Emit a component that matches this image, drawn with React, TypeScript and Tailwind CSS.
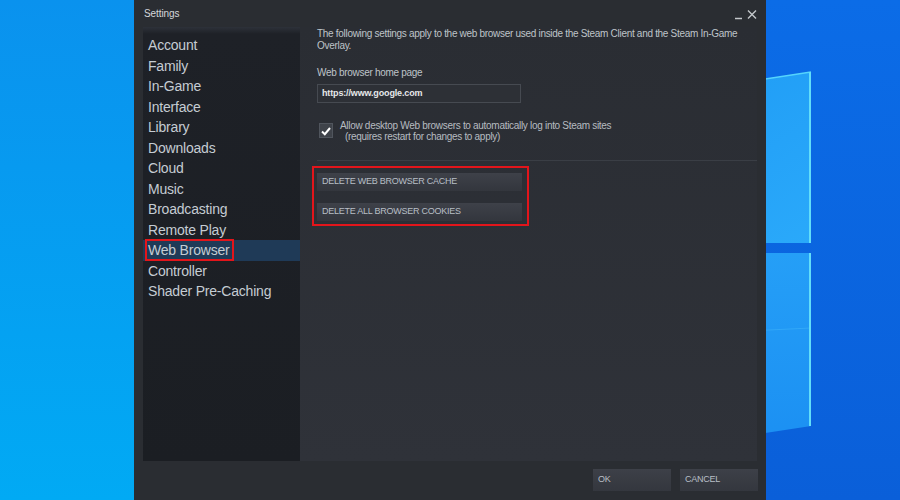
import React from 'react'

const navItems = [
    'Account',
    'Family',
    'In-Game',
    'Interface',
    'Library',
    'Downloads',
    'Cloud',
    'Music',
    'Broadcasting',
    'Remote Play',
    'Web Browser',
    'Controller',
    'Shader Pre-Caching',
]

function WindowsLogo() {
    return (
        <svg className="absolute inset-0" width="900" height="500" viewBox="0 0 900 500">
            <defs>
                <linearGradient id="paneTop" x1="0" y1="0" x2="1" y2="1">
                    <stop offset="0" stopColor="#1c98f4" />
                    <stop offset="1" stopColor="#2aa9fa" />
                </linearGradient>
                <linearGradient id="paneBottom" x1="0" y1="0" x2="0" y2="1">
                    <stop offset="0" stopColor="#259ff7" />
                    <stop offset="1" stopColor="#1a8ef2" />
                </linearGradient>
            </defs>
            {/* top pane */}
            <polygon points="560,111 811,72 811,243 560,243" fill="url(#paneTop)" />
            <line x1="560" y1="111" x2="811" y2="72" stroke="#55d4fc" strokeWidth="1.5" />
            <line x1="810" y1="72" x2="810" y2="243" stroke="#62def9" strokeWidth="2" />
            {/* bottom pane */}
            <polygon points="560,253 811,253 811,426 560,465" fill="url(#paneBottom)" />
            <line x1="560" y1="340" x2="811" y2="328" stroke="#3db2fa" strokeWidth="1" opacity="0.6" />
            <line x1="810" y1="253" x2="810" y2="426" stroke="#62def9" strokeWidth="2" />
        </svg>
    )
}

export default function App() {
    return (
        <div className="relative w-[900px] h-[500px] overflow-hidden font-['Liberation_Sans',Arial,sans-serif]">
            {/* Desktop */}
            <div className="absolute inset-0 flex">
                <div className="w-1/2 h-full bg-[linear-gradient(to_bottom,#0a92ee,#01aaf4)]" />
                <div className="w-1/2 h-full bg-[linear-gradient(to_bottom,#0b6ce7,#0a5fd9)]" />
            </div>
            <WindowsLogo />

            {/* Settings window */}
            <div className="absolute left-[134px] top-0 w-[632px] h-[500px] bg-[#2a2d32] flex flex-col">
                <div className="h-[27px] flex items-center justify-between pl-[10px] pr-[8px]">
                    <span className="text-[10px] tracking-[-0.1px] text-[#d4d7da]">Settings</span>
                    <svg width="24" height="12" viewBox="0 0 24 12" className="mt-[2px]">
                        <line x1="1" y1="9.5" x2="8" y2="9.5" stroke="#c3c7cb" strokeWidth="1.5" />
                        <path d="M14 1.5 L22 9.5 M22 1.5 L14 9.5" stroke="#c3c7cb" strokeWidth="1.4" />
                    </svg>
                </div>

                <div className="h-[434px] flex px-[9px]">
                    {/* Sidebar */}
                    <div className="w-[157px] bg-[linear-gradient(to_bottom,#2d3139_0px,#1e2127_7px,#1b1e23_100%)] pt-[8px]">
                        {navItems.map((item) => (
                            <div
                                key={item}
                                className={`relative h-[20.5px] leading-[20.5px] pl-[5px] text-[14px] tracking-[-0.2px] text-[#c5ccd3] ${item === 'Web Browser' ? 'bg-[#1f3a57]' : ''}`}
                            >
                                {item}
                                {item === 'Web Browser' && (
                                    <span className="absolute left-[2px] top-[-1px] w-[89px] h-[22px] border-2 border-[#e2151b]" />
                                )}
                            </div>
                        ))}
                    </div>

                    {/* Content */}
                    <div className="flex-1 bg-[linear-gradient(to_bottom,#2a2d33,#2f3239)] pl-[17px] pr-[17px] pt-px">
                        <p className="text-[10px] leading-[12px] tracking-[-0.3px] text-[#bfc4c9]">
                            The following settings apply to the web browser used inside the Steam Client and the Steam In-Game
                            <br />
                            Overlay.
                        </p>

                        <p className="mt-[15px] text-[10px] leading-[12px] tracking-[-0.3px] text-[#bfc4c9]">Web browser home page</p>
                        <div className="mt-[5px] w-[204px] h-[19px] border border-[#464a51] bg-[#2d3036] flex items-center pl-[4px]">
                            <span className="text-[9px] font-bold tracking-[-0.15px] text-[#e6e8ea]">https://www.google.com</span>
                        </div>

                        <div className="mt-[20px] flex items-start pl-[2px]">
                            <div className="w-[14px] h-[15px] bg-[#3f434a] border border-[#50555d] flex items-center justify-center">
                                <svg width="12" height="12" viewBox="0 0 12 12">
                                    <path d="M2 6.5 L4.8 9.2 L10 3" stroke="#ffffff" strokeWidth="2" fill="none" />
                                </svg>
                            </div>
                            <div className="ml-[7px] -mt-[3px] text-[10px] leading-[11px] tracking-[-0.3px] text-[#b7bcc1]">
                                <div>Allow desktop Web browsers to automatically log into Steam sites</div>
                                <div className="pl-[5px]">(requires restart for changes to apply)</div>
                            </div>
                        </div>

                        <div className="mt-[18px] -mr-[17px] h-px bg-[#3a3e45]" />

                        <div className="mt-[5px] -ml-[5px] w-[217px] border-2 border-[#e2151b] pl-[3px] pr-[5px] pt-[5px] pb-[3px] flex flex-col gap-[12px]">
                            {['DELETE WEB BROWSER CACHE', 'DELETE ALL BROWSER COOKIES'].map((label) => (
                                <div
                                    key={label}
                                    className="h-[18px] flex items-center pl-[5px] bg-[linear-gradient(to_bottom,#3e4149,#33363d)] text-[9px] tracking-[-0.25px] text-[#b8bfc6]"
                                >
                                    {label}
                                </div>
                            ))}
                        </div>
                    </div>
                </div>

                {/* Footer */}
                <div className="flex-1 flex justify-end gap-[9px] pt-[8px] pr-[8px]">
                    {['OK', 'CANCEL'].map((label) => (
                        <div
                            key={label}
                            className="w-[78px] h-[22px] flex items-center pl-[5px] bg-[linear-gradient(to_bottom,#3d4048,#34373e)] text-[9px] tracking-[-0.25px] text-[#b8bfc6]"
                        >
                            {label}
                        </div>
                    ))}
                </div>
            </div>
        </div>
    )
}
